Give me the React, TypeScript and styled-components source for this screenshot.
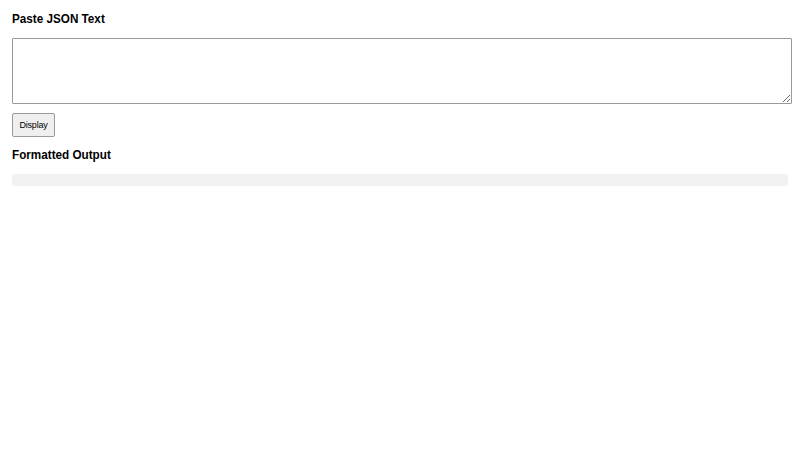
import React, { useState } from "react";
import styled, { createGlobalStyle } from "styled-components";

const Global = createGlobalStyle`
  html, body { margin: 0; padding: 0; background: #fff; }
  body { font-family: "Liberation Sans", Arial, sans-serif; color: #000; }
`;

const Page = styled.main`
  display: flex;
  flex-direction: column;
  align-items: flex-start;
  padding: 11px 12px 12px;
`;

const Heading = styled.h3<{ $top?: number }>`
  margin: ${(p) => p.$top ?? 0}px 0 0;
  font-family: "Liberation Sans", Arial, sans-serif;
  font-size: 13px;
  font-weight: bold;
  line-height: 15px;
  transform: scaleX(0.9);
  transform-origin: left center;
`;

const Input = styled.textarea`
  box-sizing: border-box;
  width: 780px;
  height: 66px;
  margin-top: 12px;
  border: 1px solid #999;
  border-radius: 1px;
  padding: 2px;
  font-family: "Liberation Mono", monospace;
  font-size: 13px;
  resize: both;
`;

const Button = styled.button`
  margin-top: 9px;
  box-sizing: border-box;
  height: 24px;
  width: 43px;
  padding: 0;
  font-family: "Liberation Sans", Arial, sans-serif;
  font-size: 9px;
  letter-spacing: -0.2px;
  color: #000;
  background: #efefef;
  border: 1px solid #999;
  border-radius: 2px;
`;

const Output = styled.pre`
  box-sizing: border-box;
  width: 776px;
  min-height: 12px;
  margin: 12px 0 0;
  padding: 0;
  background: #f2f2f2;
  border-radius: 2px;
  font-family: "Liberation Mono", monospace;
  font-size: 11px;
`;

export default function App() {
  const [text, setText] = useState("");
  const [out, setOut] = useState("");
  const display = () => {
    try {
      setOut(JSON.stringify(JSON.parse(text), null, 2));
    } catch (e) {
      setOut(String(e));
    }
  };
  return (
    <>
      <Global />
      <Page>
        <Heading>Paste JSON Text</Heading>
        <Input value={text} onChange={(e) => setText(e.target.value)} />
        <Button onClick={display}>Display</Button>
        <Heading $top={10}>Formatted Output</Heading>
        <Output>{out}</Output>
      </Page>
    </>
  );
}
